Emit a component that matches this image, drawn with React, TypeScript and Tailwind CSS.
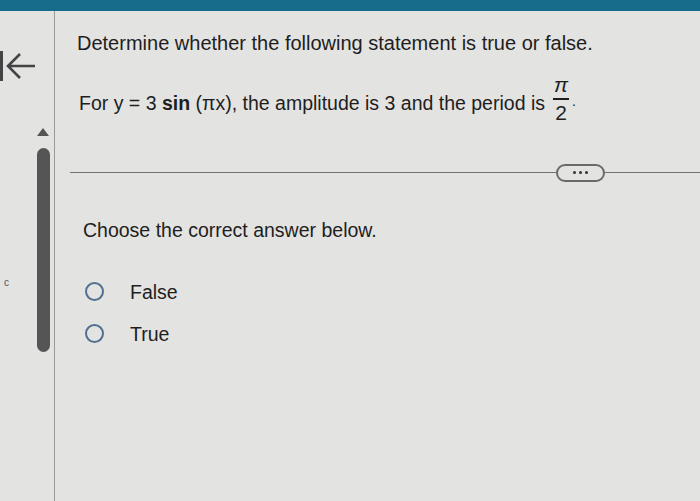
export default function App() {
  return (
    <div
      className="flex h-[501px] w-[700px] flex-col overflow-hidden bg-[#e3e3e1] text-[#1e1e1e]"
      style={{ fontFamily: '"Liberation Sans", Arial, sans-serif' }}
    >
      <div className="h-[11px] shrink-0 bg-[#176b8b]" />
      <div className="flex flex-1">
        {/* left rail */}
        <div className="relative w-[55px] shrink-0 border-r border-[#9a9a98]">
          <svg className="absolute left-0 top-[39px]" width="38" height="32" viewBox="0 0 38 32">
            <path d="M1.5 1v30" stroke="#444" strokeWidth="3" />
            <path d="M35 16H9M20 4L8 16l12 12" stroke="#444" strokeWidth="2.6" fill="none" />
          </svg>
          <svg className="absolute left-[36px] top-[116px]" width="14" height="10" viewBox="0 0 14 10">
            <path d="M7 1L13 9H1z" fill="#555" />
          </svg>
          <div className="absolute left-[37px] top-[137px] h-[204px] w-[13px] rounded-full bg-[#555]" />
          <span className="absolute left-[4px] top-[264px] text-[10px] text-[#555]">c</span>
        </div>

        {/* main */}
        <div className="flex-1">
          <p className="ml-[22px] mt-[18px] text-[20px] leading-[28px]">
            Determine whether the following statement is true or false.
          </p>
          <div className="ml-[24px] mt-[17px] flex items-center text-[19.5px]">
            <span className="mt-[9px]">
              For y = 3 <b>sin</b> (πx), the amplitude is 3 and the period is
            </span>
            <span className="ml-[8px] inline-flex flex-col items-center">
              <span className="text-[21px] italic leading-[22px]">π</span>
              <span className="my-[2px] h-[1.5px] w-[16px] bg-[#1e1e1e]" />
              <span className="text-[21px] leading-[22px]">2</span>
            </span>
            <span className="ml-[3px] mt-[6px] text-[14px]">.</span>
          </div>

          <div className="ml-[15px] mt-[40px] flex items-center">
            <div className="h-[1.5px] flex-1 bg-[#707070]" />
            <div className="flex h-[18px] w-[49px] items-center justify-center gap-[3px] rounded-full border-2 border-[#6a6a6a]">
              <span className="h-[3px] w-[3px] rounded-full bg-[#333]" />
              <span className="h-[3px] w-[3px] rounded-full bg-[#333]" />
              <span className="h-[3px] w-[3px] rounded-full bg-[#333]" />
            </div>
            <div className="h-[1.5px] w-[95px] bg-[#707070]" />
          </div>

          <p className="ml-[28px] mt-[34px] text-[19.5px]">Choose the correct answer below.</p>

          <div className="ml-[30px] mt-[36px] flex flex-col gap-[20px] text-[19.5px]">
            {["False", "True"].map((label) => (
              <label key={label} className="flex items-center">
                <span className="h-[19px] w-[19px] rounded-full border-[2.5px] border-[#50708f]" />
                <span className="ml-[26px] leading-[22px]">{label}</span>
              </label>
            ))}
          </div>
        </div>
      </div>
    </div>
  );
}
